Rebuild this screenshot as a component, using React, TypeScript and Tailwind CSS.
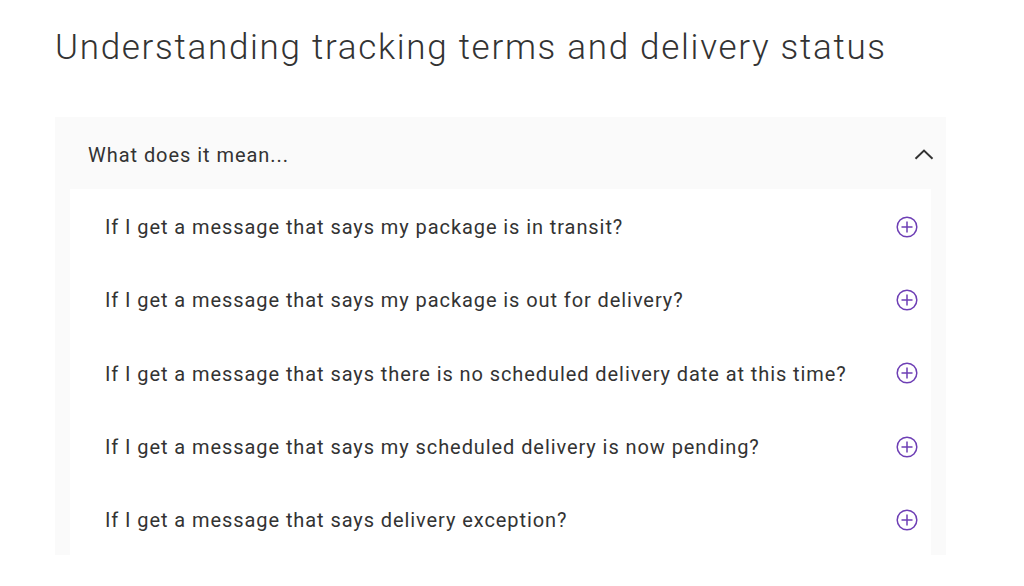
import React from 'react';

const questions = [
  'If I get a message that says my package is in transit?',
  'If I get a message that says my package is out for delivery?',
  'If I get a message that says there is no scheduled delivery date at this time?',
  'If I get a message that says my scheduled delivery is now pending?',
  'If I get a message that says delivery exception?',
];

function PlusCircle() {
  return (
    <svg width="22" height="22" viewBox="0 0 22 22" fill="none" className="shrink-0 mt-[2px]">
      <circle cx="11" cy="11" r="9.8" stroke="#6e3fb5" strokeWidth="1.5" />
      <path d="M11 5.5v11M5.5 11h11" stroke="#6e3fb5" strokeWidth="1.5" />
    </svg>
  );
}

function ChevronUp() {
  return (
    <svg width="20" height="11" viewBox="0 0 20 11" fill="none">
      <path d="M1.5 9.8L10 1.6l8.5 8.2" stroke="#333" strokeWidth="2" />
    </svg>
  );
}

export default function App() {
  return (
    <div
      className="w-[1024px] h-[586px] bg-white overflow-hidden pl-[55px] pr-[78px]"
      style={{ fontFamily: 'Roboto, "Liberation Sans", sans-serif' }}
    >
      <h1 className="pt-[26px] h-[117px] text-[35px] font-light text-[#333] leading-[44px] tracking-[1.7px] whitespace-nowrap">
        Understanding tracking terms and delivery status
      </h1>

      <div className="bg-[#fafafa]">
        <div className="h-[72px] flex items-center justify-between pl-[33px] pr-[12px] pt-[3px]">
          <span className="text-[20px] text-[#333] tracking-[0.95px]">What does it mean...</span>
          <ChevronUp />
        </div>
        <div className="mx-[15px] bg-white">
          {questions.map((q) => (
            <div key={q} className="h-[73.3px] flex items-center justify-between pl-[35px] pr-[13px]">
              <span className="text-[20px] text-[#333] tracking-[0.92px] pt-[3px]">{q}</span>
              <PlusCircle />
            </div>
          ))}
        </div>
      </div>
    </div>
  );
}
